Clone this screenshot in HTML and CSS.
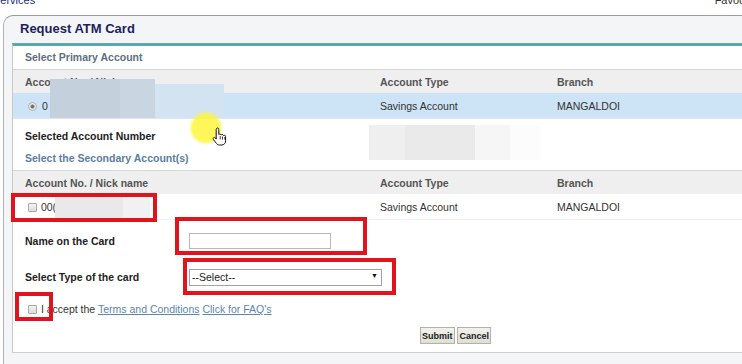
FILE: index.html
```html
<!DOCTYPE html>
<html>
<head>
    <title>Request ATM Card</title>
    <link rel="stylesheet" href="styles.css">
</head>
<body>
    <!-- Top links (cut off by the window) -->
    <div class="topbar">
        <a class="top-link" href="#">Services</a>
        <span class="top-fav">Favourites</span>
    </div>

    <div class="panel">
        <div class="panel-head">
            <h2>Request ATM Card</h2>
        </div>

        <div class="panel-body">
            <div class="section-title">Select Primary Account</div>
            <table class="acc-table">
                <tr class="head">
                    <th class="c1">Account No. / Nick name</th>
                    <th class="c2">Account Type</th>
                    <th>Branch</th>
                </tr>
                <tr class="selected">
                    <td><input type="radio" class="radio" checked> 0</td>
                    <td>Savings Account</td>
                    <td>MANGALDOI</td>
                </tr>
            </table>

            <div class="sel-acc">Selected Account Number</div>
            <div class="section-title sec-title">Select the Secondary Account(s)</div>

            <table class="acc-table second">
                <tr class="head">
                    <th class="c1">Account No. / Nick name</th>
                    <th class="c2">Account Type</th>
                    <th>Branch</th>
                </tr>
                <tr class="plain">
                    <td><input type="checkbox" class="check"> 00(</td>
                    <td>Savings Account</td>
                    <td>MANGALDOI</td>
                </tr>
            </table>

            <div class="form-row first">
                <label for="cardName">Name on the Card</label>
                <input type="text" id="cardName" class="txt">
            </div>

            <div class="form-row second-row">
                <label for="cardType">Select Type of the card</label>
                <span class="select-wrap">
                    <select id="cardType" class="sel">
                        <option>--Select--</option>
                    </select>
                </span>
            </div>

            <div class="terms">
                <input type="checkbox" class="check">
                <span>I accept the</span>
                <a href="#">Terms and Conditions</a>
                <a href="#">Click for FAQ's</a>
            </div>

            <div class="actions">
                <button class="btn">Submit</button>
                <button class="btn">Cancel</button>
            </div>
        </div>
    </div>

    <!-- Marks drawn over the screenshot: blurred-out numbers, red boxes, cursor -->
    <div class="mask m1"></div>
    <div class="mask m2"></div>
    <div class="mask m3"></div>
    <div class="mask m4"></div>
    <div class="mask m5"></div>
    <div class="mask m6"></div>
    <div class="mask m7"></div>
    <div class="mask m8"></div>
    <div class="mask m9"></div>

    <div class="red-box r1"></div>
    <div class="red-box r2"></div>
    <div class="red-box r3"></div>
    <div class="red-box r4"></div>

    <div class="glow"></div>
    <svg class="hand" width="16" height="20" viewBox="0 0 16 20">
        <path d="M5.5 1c.8 0 1.3.6 1.3 1.4v5.1c.3-.3.7-.4 1.1-.4.6 0 1.1.4 1.2.9.3-.3.7-.5 1.1-.5.6 0 1.1.4 1.2 1 .3-.2.6-.3.9-.3.8 0 1.3.6 1.3 1.4v4.2c0 2.3-1.6 4.2-3.9 4.2H7.4c-1.3 0-2.3-.6-3-1.6L1.3 12.4c-.4-.6-.3-1.3.3-1.7.5-.4 1.3-.3 1.7.2l.9 1.2V2.4c0-.8.5-1.4 1.3-1.4z" fill="#fff" stroke="#111" stroke-width="1"/>
        <path d="M8.2 9v3.4M10.5 9.5v3M12.8 10v2.6" stroke="#111" stroke-width="0.8" fill="none"/>
    </svg>
</body>
</html>
```

FILE: styles.css
```css
html, body {
    overflow: hidden;
}

body {
    margin: 0;
    background: #fff;
    font-family: "Liberation Sans", Arial, sans-serif;
    font-size: 10.5px;
    color: #333;
    position: relative;
    height: 364px;
}

/* Top links */
.topbar {
    display: flex;
    justify-content: space-between;
    height: 15px;
    overflow: hidden;
}

.top-link,
.top-fav {
    align-self: flex-start;
    margin-top: -6px;
    line-height: 12px;
    font-size: 11px;
    text-decoration: none;
}

.top-link {
    margin-left: -7px;
    color: #1d2c80;
}

.top-fav {
    margin-right: -24px;
    color: #333;
}

/* Panel */
.panel {
    margin-left: 3px;
    width: 820px;
    border-top: 1px solid #9c9c9c;
    border-left: 1px solid #b4b4b4;
    border-top-left-radius: 10px;
    background: #f3f5f6;
    padding-bottom: 14px;
}

.panel-head {
    height: 27px;
}

.panel-head h2 {
    margin: 0;
    padding-left: 16px;
    line-height: 25px;
    font-size: 13px;
    font-weight: bold;
    color: #1e1f5c;
}

.panel-body {
    margin-left: 8px;
    background: #fff;
    border-top: 3px solid #5ca7ac;
    border-left: 1px solid #c9c9c9;
    border-bottom: 1px solid #cfcfcf;
    padding-bottom: 8px;
}

.section-title {
    height: 23px;
    line-height: 23px;
    padding-left: 12px;
    font-weight: bold;
    color: #5d6f80;
}

.sec-title {
    color: #5b7ea2;
}

.sel-acc {
    margin-top: 6px;
    height: 22px;
    line-height: 22px;
    padding-left: 12px;
    font-weight: bold;
    color: #222;
}

/* Account tables */
.acc-table {
    border-collapse: collapse;
    table-layout: fixed;
    width: 100%;
}

.acc-table th,
.acc-table td {
    padding: 0 0 0 12px;
    text-align: left;
    white-space: nowrap;
}

.acc-table .c1 {
    width: 343px;
}

.acc-table .c2 {
    width: 165px;
}

.acc-table .head th {
    height: 23px;
    background: #efefef;
    border-top: 1px solid #d6d6d6;
    color: #555;
    font-weight: bold;
}

.acc-table .selected td {
    height: 25px;
    background: #cde3f6;
    border-bottom: 1px solid #dfe8f0;
    color: #333;
}

.acc-table .plain td {
    height: 25px;
    border-bottom: 1px solid #f0f0f0;
    color: #333;
}

.radio {
    appearance: none;
    width: 9px;
    height: 9px;
    margin: 0 2px 0 3px;
    border: 1px solid #b0b0b0;
    border-radius: 50%;
    background: radial-gradient(circle, #6a6a6a 0, #7a7a7a 1.6px, #e6e6e6 2.4px, #f4f4f4 100%);
    vertical-align: -1px;
}

.check {
    appearance: none;
    width: 9px;
    height: 9px;
    margin: 0 1px 0 3px;
    border: 1px solid #a8a8a8;
    border-radius: 1px;
    background: linear-gradient(#f4f4f4, #dcdcdc);
    vertical-align: -1px;
}

/* Form rows */
.form-row {
    display: flex;
    align-items: center;
    padding-left: 12px;
}

.form-row.first {
    margin-top: 12px;
    height: 17px;
}

.form-row.second-row {
    margin-top: 19px;
    height: 18px;
}

.form-row label {
    width: 164px;
    font-weight: bold;
    color: #222;
}

.txt {
    box-sizing: border-box;
    width: 142px;
    height: 16px;
    margin: 0;
    border: 1px solid #b8b8b8;
    padding: 0 3px;
    font-size: 10.5px;
}

.select-wrap {
    position: relative;
    display: inline-block;
}

.sel {
    appearance: none;
    box-sizing: border-box;
    width: 193px;
    height: 17px;
    margin: 0;
    padding: 0 2px;
    border: 1px solid #a3a3a3;
    border-radius: 0;
    background: #fff;
    font-family: "Liberation Sans", Arial, sans-serif;
    font-size: 10.5px;
    color: #222;
}

.select-wrap::after {
    content: "\25BC";
    position: absolute;
    right: 4px;
    top: 3px;
    font-size: 7px;
    color: #111;
    pointer-events: none;
}

.terms {
    margin-top: 16px;
    height: 14px;
    line-height: 14px;
    padding-left: 12px;
    color: #333;
}

.terms a {
    color: #5a86b2;
}

.actions {
    margin-top: 11px;
    padding-left: 407px;
    height: 17px;
}

.btn {
    height: 17px;
    padding: 0 1px;
    margin: 0;
    border: 1px solid #b2b2a8;
    background: linear-gradient(#f2f2ec, #dedfd4);
    font-family: "Liberation Sans", Arial, sans-serif;
    font-weight: bold;
    font-size: 9px;
    color: #222;
}

/* Overlays */
.mask,
.red-box,
.glow,
.hand {
    position: absolute;
}

.m1 { left: 50px;  top: 79px;  width: 70px;  height: 39px; background: #c4d1dd; }
.m2 { left: 120px; top: 79px;  width: 35px;  height: 39px; background: #c9d6e2; }
.m3 { left: 155px; top: 84px;  width: 69px;  height: 34px; background: #d3e3f1; }
.m4 { left: 369px; top: 125px; width: 36px;  height: 35px; background: #efefef; }
.m5 { left: 405px; top: 125px; width: 70px;  height: 35px; background: #eaeaea; }
.m6 { left: 475px; top: 125px; width: 35px;  height: 35px; background: #f6f6f6; }
.m7 { left: 510px; top: 125px; width: 30px;  height: 35px; background: #fcfcfc; }
.m8 { left: 55px;  top: 195px; width: 68px;  height: 26px; background: #e9e9e9; }
.m9 { left: 123px; top: 195px; width: 27px;  height: 26px; background: #f1f1f1; }

.red-box {
    box-sizing: border-box;
    border: 4px solid #e1141d;
}

.r1 { left: 11px;  top: 193px; width: 146px; height: 29px; }
.r2 { left: 175px; top: 217px; width: 192px; height: 38px; }
.r3 { left: 183px; top: 258px; width: 213px; height: 37px; }
.r4 { left: 15px;  top: 292px; width: 38px;  height: 29px; }

.glow {
    left: 189px;
    top: 111px;
    width: 34px;
    height: 34px;
    border-radius: 50%;
    background: radial-gradient(circle, rgba(255, 245, 60, 0.85) 55%, rgba(255, 245, 60, 0) 72%);
}

.hand {
    left: 212px;
    top: 127px;
}
```
